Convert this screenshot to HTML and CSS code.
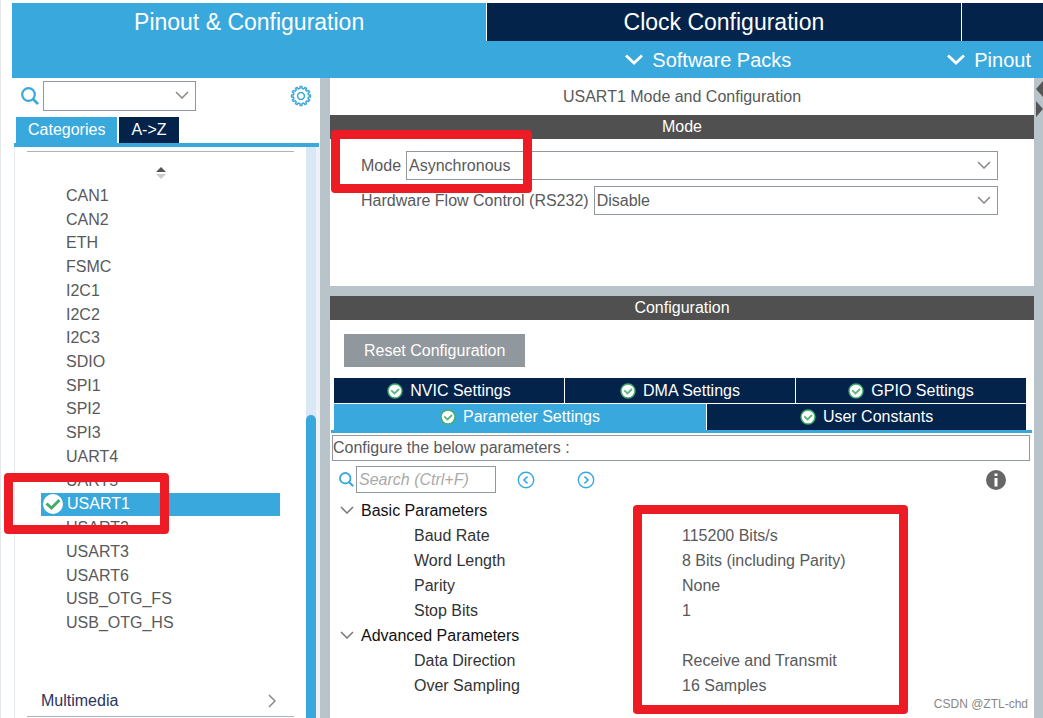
FILE: index.html
```
<!DOCTYPE html>
<html lang="en">
<head>
    <meta charset="UTF-8">
    <meta name="viewport" content="width=device-width, initial-scale=1.0">
    <title>USART1 Mode and Configuration</title>
    <link rel="stylesheet" href="styles.css">
</head>
<body>
    <svg style="display: none;">
        <defs>
            <symbol id="chevron" viewBox="0 0 14 8">
                <path d="M1 1l6 6 6-6" fill="none" stroke="currentColor" stroke-width="1.5"/>
            </symbol>
            <symbol id="search" viewBox="0 0 18 18">
                <circle cx="7.5" cy="7.5" r="6.3" fill="none" stroke="currentColor" stroke-width="2.2"/>
                <path d="M12 12l5 5" stroke="currentColor" stroke-width="2.6"/>
            </symbol>
            <symbol id="check" viewBox="0 0 16 16">
                <circle cx="8" cy="8" r="7" fill="#fff" stroke="#43ac6a" stroke-width="1.4"/>
                <path d="M4.2 7.4l3.300 3 4.500-4.400" fill="none" stroke="#5cb880" stroke-width="1.800"/>
            </symbol>
        </defs>
    </svg>

    <header>
        <nav class="main-tabs">
            <button class="active">Pinout &amp; Configuration</button>
            <button>Clock Configuration</button>
            <button aria-label="Project Manager"></button>
        </nav>
        <div class="menu-bar">
            <button><svg width="18" height="11" viewBox="0 0 18 11"><path d="M1 1.500l8 7.500 8-7.500" fill="none" stroke="#fff" stroke-width="2.800"/></svg>Software Packs</button>
            <button><svg width="18" height="11" viewBox="0 0 18 11"><path d="M1 1.500l8 7.500 8-7.500" fill="none" stroke="#fff" stroke-width="2.800"/></svg>Pinout</button>
        </div>
    </header>

    <main>
        <aside>
            <div class="filter">
                <label for="filter" aria-label="Find"><svg width="18" height="18"><use href="#search"/></svg></label>
                <span class="select">
                    <select id="filter"><option></option></select>
                    <svg width="14" height="8"><use href="#chevron"/></svg>
                </span>
                <button class="gear" aria-label="Settings">
                    <svg width="22" height="22" viewBox="-11 -11 22 22" fill="none" stroke="#39a8dc" stroke-width="1.5">
                        <path d="M-.83-9.46L.83-9.46 1.19-7.51 2.72-7.1 4.01-8.61 5.45-7.78 4.78-5.91 5.91-4.78 7.78-5.45 8.61-4.01 7.1-2.72 7.51-1.19 9.46-.83 9.46.83 7.51 1.19 7.1 2.72 8.61 4.01 7.78 5.45 5.91 4.78 4.78 5.91 5.45 7.78 4.01 8.61 2.72 7.1 1.19 7.51.83 9.46-.83 9.46-1.19 7.51-2.72 7.1-4.01 8.61-5.45 7.78-4.78 5.91-5.91 4.78-7.78 5.45-8.61 4.01-7.1 2.72-7.51 1.19-9.46.83-9.46-.83-7.51-1.19-7.1-2.72-8.61-4.01-7.78-5.45-5.91-4.78-4.78-5.91-5.45-7.78-4.01-8.61-2.72-7.1-1.19-7.51z"/>
                        <circle r="3.4"/>
                    </svg>
                </button>
            </div>
            <div class="side-tabs">
                <button class="active">Categories</button>
                <button>A-&gt;Z</button>
            </div>
            <div class="side-panel">
                <div class="categories">
                    <button class="sort" aria-label="Sort">
                        <svg width="12" height="14" viewBox="0 0 12 14"><path d="M1 6l5-5 5 5z" fill="#555"/><path d="M1 8h10l-5 5z" fill="#ccc"/></svg>
                    </button>
                    <ul>
                        <li><a href="#">CAN1</a></li>
                        <li><a href="#">CAN2</a></li>
                        <li><a href="#">ETH</a></li>
                        <li><a href="#">FSMC</a></li>
                        <li><a href="#">I2C1</a></li>
                        <li><a href="#">I2C2</a></li>
                        <li><a href="#">I2C3</a></li>
                        <li><a href="#">SDIO</a></li>
                        <li><a href="#">SPI1</a></li>
                        <li><a href="#">SPI2</a></li>
                        <li><a href="#">SPI3</a></li>
                        <li><a href="#">UART4</a></li>
                        <li><a href="#">UART5</a></li>
                        <li class="selected">
                            <a href="#"><svg width="20" height="20" viewBox="0 0 20 20"><circle cx="10" cy="10" r="10" fill="#fff"/><path d="M3.5 9.500l5 4.500 8-8" fill="none" stroke="#43ac6a" stroke-width="3"/></svg>USART1</a>
                            <span class="mark mark-item"></span>
                        </li>
                        <li><a href="#">USART2</a></li>
                        <li><a href="#">USART3</a></li>
                        <li><a href="#">USART6</a></li>
                        <li><a href="#">USB_OTG_FS</a></li>
                        <li><a href="#">USB_OTG_HS</a></li>
                    </ul>
                    <button class="group">Multimedia <svg width="8" height="14" viewBox="0 0 8 14"><path d="M1 1l6 6-6 6" fill="none" stroke="#888" stroke-width="1.5"/></svg></button>
                </div>
                <div class="scrollbar"><div class="thumb"></div></div>
            </div>
        </aside>

        <div class="divider"></div>

        <section class="content">
            <h1>USART1 Mode and Configuration</h1>
            <h2>Mode</h2>
            <div class="mode">
                <div class="field">
                    <label for="mode">Mode</label>
                    <span class="select">
                        <select id="mode"><option>Asynchronous</option></select>
                        <svg width="14" height="8"><use href="#chevron"/></svg>
                    </span>
                    <span class="mark mark-mode"></span>
                </div>
                <div class="field">
                    <label for="flow">Hardware Flow Control (RS232)</label>
                    <span class="select">
                        <select id="flow"><option>Disable</option></select>
                        <svg width="14" height="8"><use href="#chevron"/></svg>
                    </span>
                </div>
            </div>

            <h2>Configuration</h2>
            <div class="config">
                <button class="reset">Reset Configuration</button>
                <div class="config-tabs">
                    <div class="tab-row top">
                        <button><svg width="16" height="16"><use href="#check"/></svg>NVIC Settings</button>
                        <button><svg width="16" height="16"><use href="#check"/></svg>DMA Settings</button>
                        <button><svg width="16" height="16"><use href="#check"/></svg>GPIO Settings</button>
                    </div>
                    <div class="tab-row bottom">
                        <button class="active"><svg width="16" height="16"><use href="#check"/></svg>Parameter Settings</button>
                        <button><svg width="16" height="16"><use href="#check"/></svg>User Constants</button>
                    </div>
                </div>
                <p class="hint">Configure the below parameters :</p>
                <div class="toolbar">
                    <label for="search" aria-label="Search"><svg width="15" height="15"><use href="#search"/></svg></label>
                    <input type="text" id="search" placeholder="Search (Ctrl+F)">
                    <button aria-label="Previous"><svg width="18" height="18" viewBox="0 0 18 18" fill="none" stroke="#39a8dc"><circle cx="9" cy="9" r="7.7" stroke-width="1.4"/><path d="M10.5 5.5L7 9l3.5 3.5" stroke-width="1.7"/></svg></button>
                    <button aria-label="Next"><svg width="18" height="18" viewBox="0 0 18 18" fill="none" stroke="#39a8dc"><circle cx="9" cy="9" r="7.7" stroke-width="1.4"/><path d="M7.5 5.5L11 9l-3.5 3.5" stroke-width="1.7"/></svg></button>
                    <button class="info" aria-label="Info"><svg width="20" height="20" viewBox="0 0 20 20"><circle cx="10" cy="10" r="10" fill="#666"/><path d="M8.5 3.5h3v2.5h-3zM8.5 8h3v8.5h-3z" fill="#fff"/></svg></button>
                </div>
                <div class="params">
                    <table>
                        <tr><th colspan="2"><svg width="14" height="8"><use href="#chevron"/></svg>Basic Parameters</th></tr>
                        <tr><td>Baud Rate</td><td>115200 Bits/s</td></tr>
                        <tr><td>Word Length</td><td>8 Bits (including Parity)</td></tr>
                        <tr><td>Parity</td><td>None</td></tr>
                        <tr><td>Stop Bits</td><td>1</td></tr>
                        <tr><th colspan="2"><svg width="14" height="8"><use href="#chevron"/></svg>Advanced Parameters</th></tr>
                        <tr><td>Data Direction</td><td>Receive and Transmit</td></tr>
                        <tr><td>Over Sampling</td><td>16 Samples</td></tr>
                    </table>
                    <span class="mark mark-values"></span>
                </div>
            </div>
        </section>

        <div class="rail">
            <button aria-label="Collapse"><svg width="7" height="16" viewBox="0 0 7 16"><path d="M0 8l7-8v16z" fill="#555"/></svg></button>
            <button aria-label="Expand"><svg width="7" height="16" viewBox="0 0 7 16"><path d="M7 8L0 0v16z" fill="#555"/></svg></button>
        </div>
    </main>
    <div class="watermark">CSDN @ZTL-chd</div>
</body>
</html>
```
FILE: styles.css
```
* {
    margin: 0;
    padding: 0;
    box-sizing: border-box;
}
body {
    display: flex;
    flex-direction: column;
    min-height: 100vh;
    padding: 3px 0 0 11px;
    border-left: 1px solid #e4e6e8;
    font-family: "Liberation Sans", Arial, sans-serif;
    font-size: 16px;
    line-height: 24px;
    color: #58595b;
    background-color: #fff;
}
button, select, input {
    font: inherit;
    color: inherit;
    border: none;
    background: none;
}
svg {
    display: block;
    flex-shrink: 0;
}

/* header */
.main-tabs {
    display: grid;
    grid-template-columns: 46% 46% 1fr;
}
.main-tabs button {
    height: 38px;
    font-size: 23px;
    color: #fff;
    background-color: #03234b;
    border-left: 1px solid #fff;
}
.main-tabs .active {
    background-color: #39a8dc;
    border-left: none;
}
.menu-bar {
    display: flex;
    justify-content: flex-end;
    gap: 156px;
    padding-right: 12px;
    background-color: #39a8dc;
}
.menu-bar button {
    display: flex;
    align-items: center;
    gap: 9px;
    height: 37px;
    font-size: 20px;
    color: #fff;
}

main {
    flex: 1;
    display: grid;
    grid-template-columns: 7fr 10px 16fr 9px;
}
.divider, .rail {
    background-color: #b8c4ca;
}
.rail {
    display: flex;
    flex-direction: column;
    align-items: flex-end;
    gap: 4px;
    padding-top: 3px;
}

/* dropdowns */
.select {
    position: relative;
    display: block;
}
.select select {
    display: block;
    width: 100%;
    height: 29px;
    padding-left: 2px;
    border: 1px solid #91989d;
    background-color: #fff;
    appearance: none;
}
.select svg {
    position: absolute;
    right: 7px;
    top: 10px;
    color: #888;
    pointer-events: none;
}

/* sidebar */
aside {
    display: flex;
    flex-direction: column;
}
.filter {
    display: flex;
    align-items: center;
    gap: 4px;
    padding: 3px 8px 6px 9px;
    color: #39a8dc;
}
.filter .select {
    width: 153px;
}
.filter select {
    height: 30px;
}
.gear {
    margin-left: auto;
}
.side-tabs {
    display: flex;
    gap: 2px;
    margin: 0 1px 0 2px;
    padding-left: 2px;
    border-bottom: 4px solid #39a8dc;
}
.side-tabs button {
    height: 26px;
    padding: 0 12px;
    color: #fff;
    background-color: #03234b;
}
.side-tabs .active {
    background-color: #39a8dc;
}
.side-panel {
    flex: 1;
    display: flex;
    justify-content: space-between;
    margin-left: 2px;
    border-left: 1px solid #e6ebef;
    border-right: 4px solid #eef2f6;
}
.categories {
    flex: 1;
    margin: 4px 12px 0;
    border-top: 1px solid #a9b5bc;
}
.sort {
    display: block;
    margin: 14px auto 4px;
}
.categories ul {
    display: grid;
    grid-auto-rows: 1fr;
    height: 451px;
    margin: 0 14px;
    line-height: 20px;
    list-style: none;
}
.categories li {
    position: relative;
}
.categories a {
    display: flex;
    align-items: center;
    height: 100%;
    padding-left: 25px;
    color: inherit;
    text-decoration: none;
}
.categories .selected a {
    gap: 4px;
    padding-left: 2px;
    color: #fff;
    background-color: #39a8dc;
}
.group {
    display: flex;
    justify-content: space-between;
    align-items: center;
    width: 100%;
    margin-top: 51px;
    padding: 3px 18px 3px 14px;
    color: #2a3560;
    border-bottom: 1px solid #a9b5bc;
}
.scrollbar {
    width: 10px;
    display: flex;
    flex-direction: column;
    justify-content: flex-end;
    background-color: #dae8f6;
}
.thumb {
    height: 53%;
    border-radius: 5px 5px 0 0;
    background-color: #39a8dc;
}

/* right side */
h1, h2 {
    font-size: 16px;
    font-weight: normal;
    text-align: center;
}
h1 {
    line-height: 37px;
}
h2 {
    line-height: 24px;
    height: 24px;
    color: #fff;
    background-color: #4f504f;
}
.mode {
    display: flex;
    flex-direction: column;
    gap: 6px;
    height: 157px;
    padding: 12px 36px 0 31px;
    border-bottom: 10px solid #b8c4ca;
}
.field {
    position: relative;
    display: flex;
    align-items: center;
    gap: 5px;
}
.field .select {
    flex: 1;
}
.reset {
    display: block;
    margin: 14px 0 11px 14px;
    height: 33px;
    padding: 0 20px;
    color: #fff;
    background-color: #91989d;
}
.config-tabs {
    margin: 0 2px 2px 1px;
    padding: 0 6px 0 3px;
    border-bottom: 3px solid #39a8dc;
}
.tab-row {
    display: grid;
    gap: 1px;
}
.tab-row.top {
    grid-template-columns: 1fr 1fr 1fr;
    margin-bottom: 1px;
}
.tab-row.bottom {
    grid-template-columns: 7fr 6fr;
}
.tab-row button {
    display: flex;
    justify-content: center;
    align-items: center;
    gap: 7px;
    height: 25px;
    color: #fff;
    background-color: #03234b;
}
.tab-row.bottom button {
    height: 26px;
}
.tab-row .active {
    background-color: #39a8dc;
}
.hint {
    margin: 0 4px 5px 2px;
    border: 1px solid #91989d;
}
.toolbar {
    display: flex;
    align-items: center;
    padding: 0 28px 0 9px;
    color: #39a8dc;
}
.toolbar input {
    width: 140px;
    height: 27px;
    margin: 0 21px 0 2px;
    padding-left: 2px;
    color: #58595b;
    border: 1px solid #91989d;
}
.toolbar input::placeholder {
    font-style: italic;
    color: #aaa;
}
.toolbar button {
    margin-right: 42px;
}
.toolbar .info {
    margin: 0 0 0 auto;
}
.params {
    position: relative;
    padding: 5px 0 16px;
}
.params table {
    width: 100%;
    border-collapse: collapse;
    table-layout: fixed;
}
.params th {
    text-align: left;
    font-weight: normal;
    color: #111;
    padding-left: 10px;
    height: 25px;
}
.params th svg {
    display: inline-block;
    margin-right: 7px;
    vertical-align: 2px;
    color: #777;
}
.params td {
    height: 25px;
}
.params td:first-child {
    padding-left: 84px;
    color: #333;
}

/* red highlight frames */
.mark {
    position: absolute;
    z-index: 2;
    border: 9px solid #ed1c24;
    border-radius: 4px;
    pointer-events: none;
}
.mark-item {
    left: -37px;
    top: -20px;
    width: 165px;
    height: 61px;
}
.mark-mode {
    left: -30px;
    top: -21px;
    width: 201px;
    height: 63px;
}
.mark-values {
    left: 303px;
    top: 12px;
    width: 275px;
    height: 209px;
}
.watermark {
    position: absolute;
    right: 15px;
    bottom: 6px;
    font-size: 12px;
    line-height: 16px;
    color: #888;
}
```
